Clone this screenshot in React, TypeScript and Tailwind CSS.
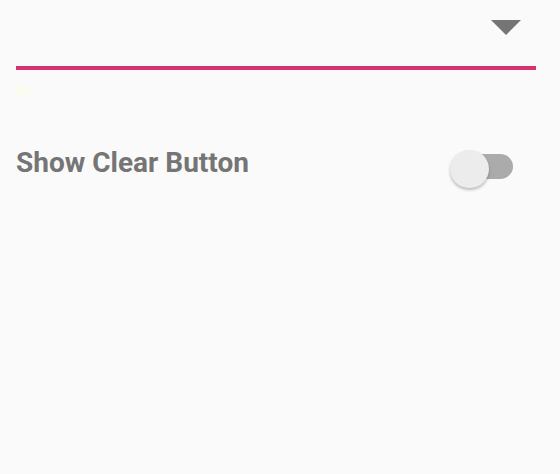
export default function App() {
    return (
        <div className="w-[560px] h-[474px] bg-[#fafafa] overflow-hidden" style={{ fontFamily: 'Roboto, "Liberation Sans", sans-serif' }}>
            {/* Dropdown field */}
            <div className="pl-4 pr-6 pt-[20px]">
                <div className="flex justify-end pr-[15px]">
                    <svg width="30" height="15" viewBox="0 0 30 15">
                        <polygon points="0,0 30,0 15,15" fill="#757575" />
                    </svg>
                </div>
            </div>
            <div className="ml-4 mr-6 mt-[31px] h-[4px] border-t-2 border-[#c8376f] bg-[#e2306f]" />
            <div className="ml-4 mt-[16px] w-[14px] h-[8px] bg-[#fbfbee]" />

            {/* Toggle row */}
            <div className="flex items-center justify-between pl-4 pr-[47px] mt-[44px]">
                <span className="text-[28px] leading-[34px] font-bold text-[#757575]">Show Clear Button</span>
                <div className="flex items-center pt-[7px]">
                    <div className="relative z-10 mt-[5px] w-[39px] h-[38px] rounded-full bg-[#ececec] shadow-[0_2px_3px_rgba(0,0,0,0.25)]" />
                    <div className="-ml-[20px] w-[44px] h-[25px] rounded-full bg-[#ababab]" />
                </div>
            </div>
        </div>
    );
}
